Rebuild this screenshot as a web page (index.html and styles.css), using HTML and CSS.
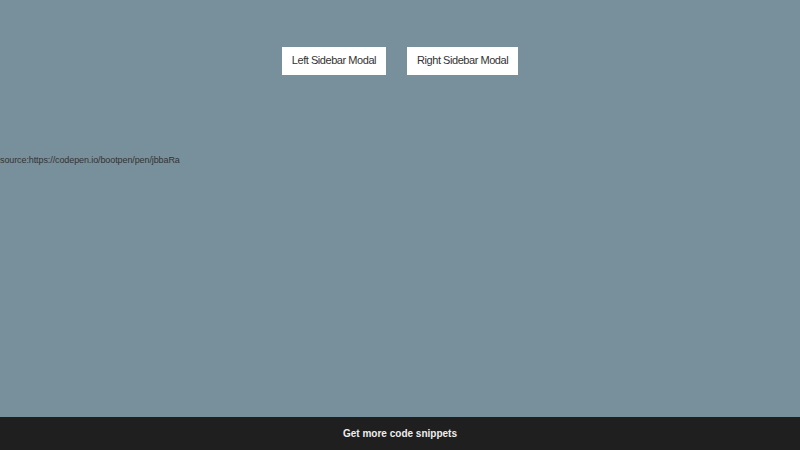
FILE: index.html
```html
<!DOCTYPE html>
<html lang="en">
<head>
    <meta charset="UTF-8">
    <meta name="viewport" content="width=device-width, initial-scale=1.0">
    <title>Sidebar Modal</title>
    <link rel="stylesheet" href="styles.css">
</head>
<body>
    <div class="container">
        <div class="buttons">
            <button class="btn-demo" type="button">Left Sidebar Modal</button>
            <button class="btn-demo" type="button">Right Sidebar Modal</button>
        </div>
    </div>

    <p class="source">source:https://codepen.io/bootpen/pen/jbbaRa</p>

    <footer class="snippets-bar">
        <a href="#">Get more code snippets</a>
    </footer>
</body>
</html>
```

FILE: styles.css
```css
body {
    margin: 0;
    min-height: 100vh;
    background-color: #78909c;
    font-family: "Liberation Sans", Arial, sans-serif;
    color: #333;
}

.container {
    padding-top: 47px;
}

.buttons {
    display: flex;
    justify-content: center;
    gap: 21px;
}

.btn-demo {
    height: 28px;
    padding: 0 10px 2px;
    border: none;
    border-radius: 0;
    background-color: #fff;
    color: #333;
    font-family: "Liberation Sans", Arial, sans-serif;
    font-size: 11px;
    letter-spacing: -0.45px;
    cursor: pointer;
}

.source {
    margin: 78px 0 0;
    font-size: 9px;
    letter-spacing: -0.1px;
    line-height: 14px;
    color: #333;
}

.snippets-bar {
    position: fixed;
    left: 0;
    right: 0;
    bottom: 0;
    height: 33px;
    display: flex;
    align-items: center;
    justify-content: center;
    background-color: #1f1f1f;
}

.snippets-bar a {
    color: #eee;
    font-size: 10px;
    font-weight: bold;
    text-decoration: none;
}
```
